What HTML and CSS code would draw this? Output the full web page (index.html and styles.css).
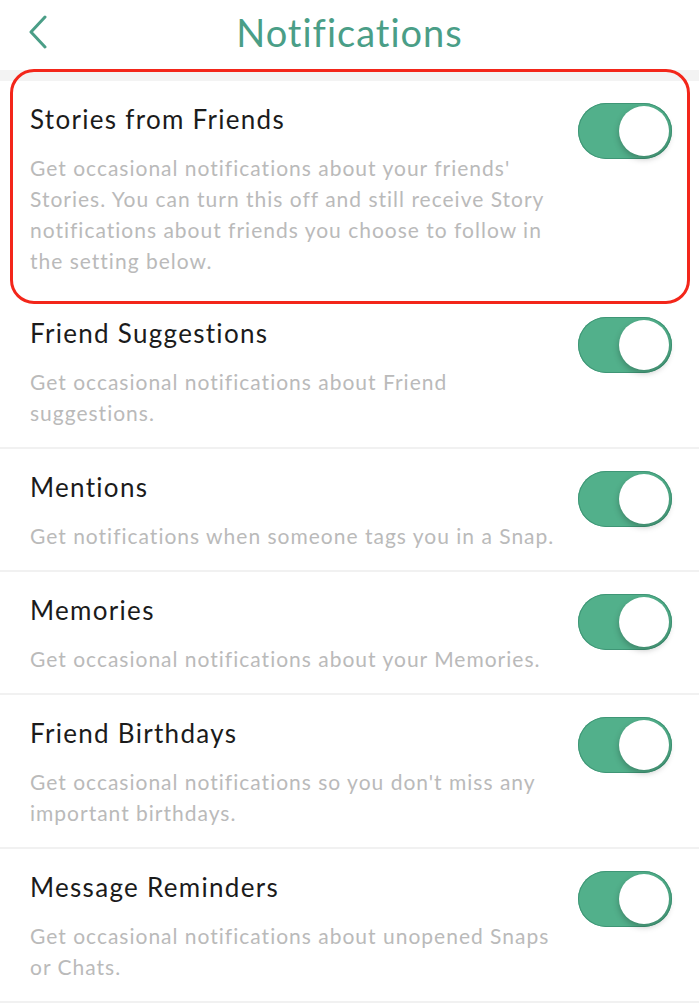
FILE: index.html
```html
<!DOCTYPE html>
<html lang="en">

<head>
  <meta charset="UTF-8">
  <meta name="viewport" content="width=device-width, initial-scale=1.0">
  <title>Notifications</title>
  <link rel="stylesheet" href="styles.css">
</head>

<body>
  <div class="header">
    <button class="back-button" aria-label="Back">
      <svg width="20" height="34" viewBox="0 0 20 34">
        <path d="M17 2 L3 17 L17 32" fill="none" stroke="#4a9e87" stroke-width="3" stroke-linecap="round" stroke-linejoin="round" />
      </svg>
    </button>
    <h1>Notifications</h1>
  </div>

  <div class="gap"></div>

  <div class="list">
    <div class="row highlight">
      <div class="row-text">
        <h2 class="row-title">Stories from Friends</h2>
        <p class="row-desc">Get occasional notifications about your friends' Stories. You can turn this off and still receive Story notifications about friends you choose to follow in the setting below.</p>
      </div>
      <div class="toggle on"><span class="knob"></span></div>
    </div>

    <div class="row">
      <div class="row-text">
        <h2 class="row-title">Friend Suggestions</h2>
        <p class="row-desc">Get occasional notifications about Friend suggestions.</p>
      </div>
      <div class="toggle on"><span class="knob"></span></div>
    </div>

    <div class="row">
      <div class="row-text">
        <h2 class="row-title">Mentions</h2>
        <p class="row-desc">Get notifications when someone tags you in a Snap.</p>
      </div>
      <div class="toggle on"><span class="knob"></span></div>
    </div>

    <div class="row">
      <div class="row-text">
        <h2 class="row-title">Memories</h2>
        <p class="row-desc">Get occasional notifications about your Memories.</p>
      </div>
      <div class="toggle on"><span class="knob"></span></div>
    </div>

    <div class="row">
      <div class="row-text">
        <h2 class="row-title">Friend Birthdays</h2>
        <p class="row-desc">Get occasional notifications so you don't miss any important birthdays.</p>
      </div>
      <div class="toggle on"><span class="knob"></span></div>
    </div>

    <div class="row">
      <div class="row-text">
        <h2 class="row-title">Message Reminders</h2>
        <p class="row-desc">Get occasional notifications about unopened Snaps or Chats.</p>
      </div>
      <div class="toggle on"><span class="knob"></span></div>
    </div>
  </div>

  <script>
    document.querySelectorAll('.toggle').forEach(toggle => {
      toggle.addEventListener('click', () => {
        toggle.classList.toggle('on');
      });
    });
  </script>
</body>

</html>
```

FILE: styles.css
```css
body {
  font-family: Lato, "Noto Sans", sans-serif;
  margin: 0;
  padding: 0;
  background-color: #fff;
  color: #1b1b1b;
}

.header {
  height: 70px;
  display: flex;
  justify-content: center;
  align-items: center;
  position: relative;
}

.back-button {
  position: absolute;
  left: 28px;
  top: 15px;
  padding: 0;
  border: none;
  background: none;
  cursor: pointer;
}

h1 {
  margin: 0 0 6px;
  font-size: 38px;
  font-weight: 400;
  letter-spacing: 1px;
  color: #4a9e87;
}

.gap {
  height: 11px;
  background-color: #f3f3f3;
}

.row {
  display: flex;
  justify-content: space-between;
  align-items: flex-start;
  padding: 22px 27px 19px 30px;
  border-bottom: 2px solid #f1f1f1;
  position: relative;
}

.row.highlight {
  border-bottom: none;
}

.row.highlight::after {
  content: "";
  position: absolute;
  left: 10px;
  right: 9px;
  top: -12px;
  bottom: -9px;
  border: 3px solid #f3261a;
  border-radius: 24px;
  pointer-events: none;
}

.row-text {
  width: 540px;
}

.row-title {
  margin: 0;
  font-size: 26px;
  font-weight: 400;
  letter-spacing: 1.3px;
  line-height: 32px;
}

.row-desc {
  margin: 17px 0 0;
  font-size: 21px;
  letter-spacing: 1px;
  line-height: 31px;
  color: #bababa;
}

.toggle {
  width: 94px;
  height: 56px;
  border-radius: 28px;
  background-color: #e5e5e5;
  position: relative;
  cursor: pointer;
  flex-shrink: 0;
  box-shadow: inset 0 0 0 1px rgba(0, 0, 0, 0.06);
}

.toggle.on {
  background-color: #52b08b;
  box-shadow: inset 0 0 0 1px #3f9676;
}

.knob {
  position: absolute;
  top: 3px;
  left: 3px;
  width: 50px;
  height: 50px;
  border-radius: 50%;
  background-color: #fff;
  box-shadow: 0 3px 6px rgba(0, 0, 0, 0.25);
  transition: 0.2s;
}

.toggle.on .knob {
  left: 41px;
}
```
